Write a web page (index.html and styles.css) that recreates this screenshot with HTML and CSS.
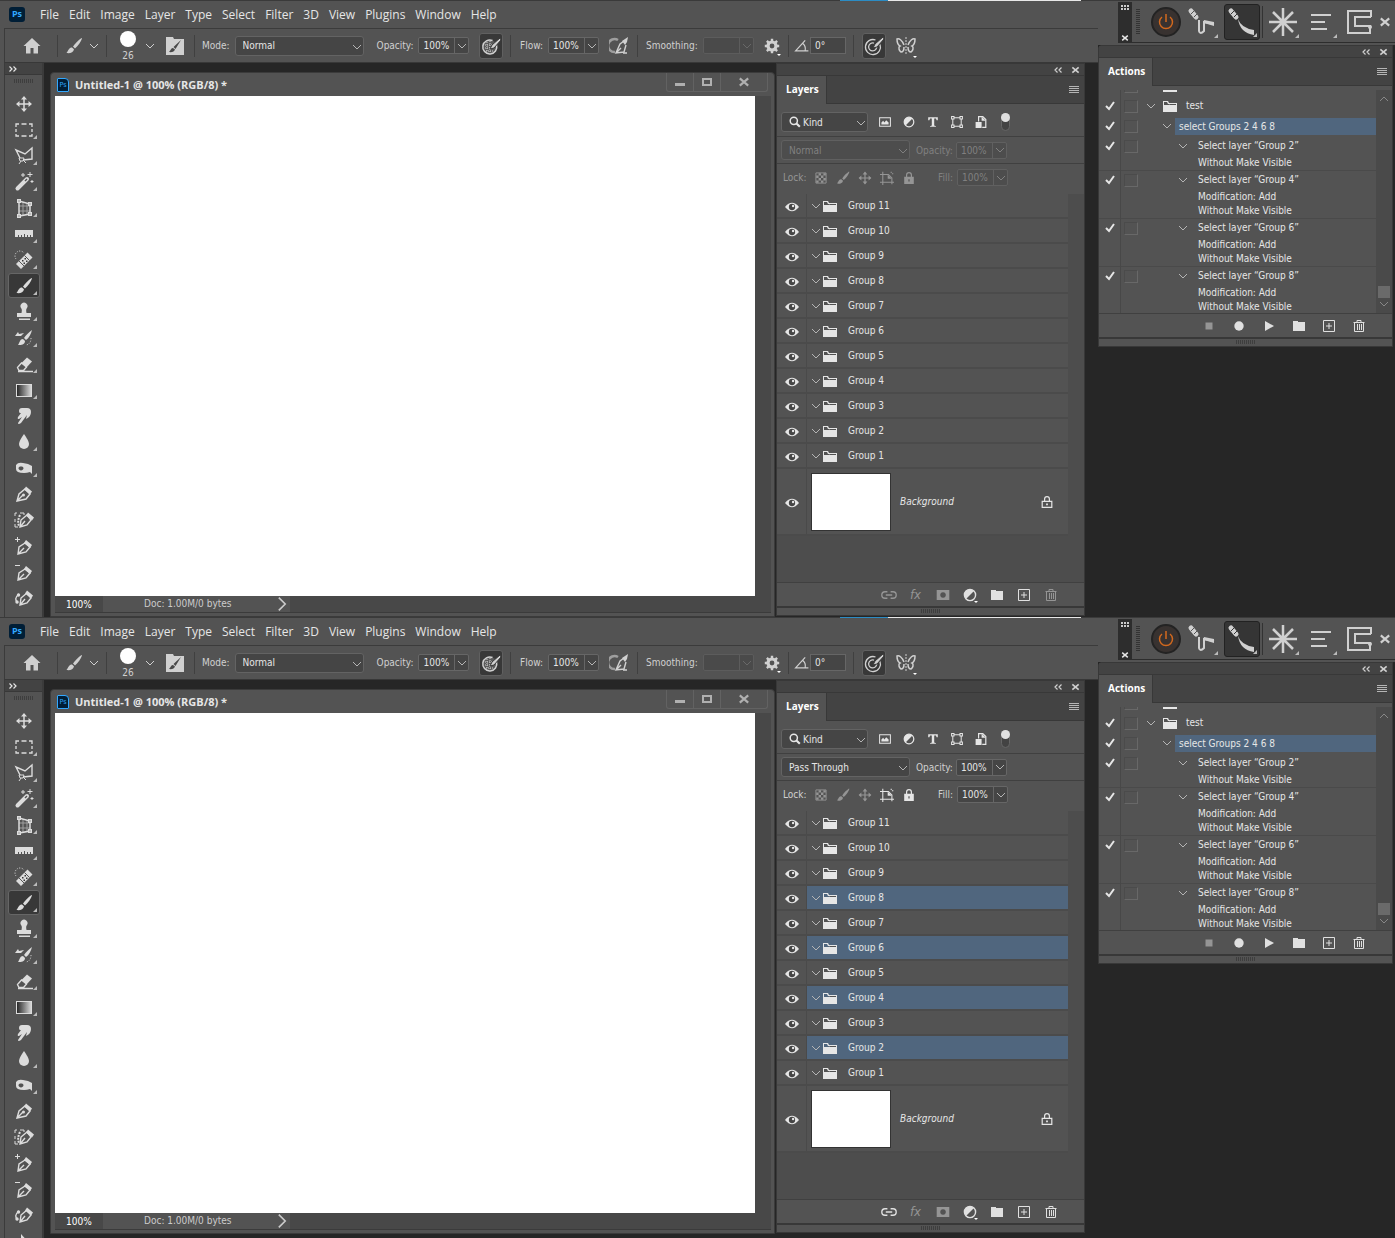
FILE: index.html
```html
<!DOCTYPE html>
<html lang="en">

<head>
    <meta charset="UTF-8">
    <meta name="viewport" content="width=device-width, initial-scale=1.0">
    <title>Select Groups Action</title>
    <link rel="stylesheet" href="styles.css">
</head>

<body>
    <svg class="sprite" aria-hidden="true">
        <symbol id="chevron" viewBox="0 0 10 10"><path d="M1 3l4 4 4-4" fill="none" stroke="currentColor"/></symbol>
        <symbol id="collapse" viewBox="0 0 10 10"><path d="M4.500 2.500L2 5l2.500 2.500M8.500 2.500L6 5l2.500 2.500" fill="none" stroke="currentColor" stroke-width="1.200"/></symbol>
        <symbol id="cross" viewBox="0 0 10 10"><path d="M1.500 2l7 6M8.500 2l-7 6" fill="none" stroke="currentColor" stroke-width="1.800"/></symbol>
        <symbol id="menu" viewBox="0 0 10 10"><path d="M0 1.500h10M0 3.500h10M0 5.500h10M0 7.500h10" stroke="currentColor"/></symbol>
        <symbol id="home" viewBox="0 0 20 20"><path d="M10 2L1.500 10H4v7.500h4.500V12h3v5.500H16V10h2.500z"/></symbol>
        <symbol id="brush" viewBox="0 0 20 20"><path d="M17.500 2c-3 2-6.500 5.500-8.500 8.500l2 2C14 10 17 5.500 18 2.500zM8 11.500c-3 0-3.500 2.500-5.500 5.500 3.500.6 7-.5 7.500-3.700z"/></symbol>
        <symbol id="brush-panel" viewBox="0 0 20 20"><path d="M1 1h7l1 2h10v16H1z"/><path d="M16 4L8.500 11l2 2zM8 12c-2 0-2 2-4 4 3 .5 5.500-.5 6-2.500z" fill="#484848"/></symbol>
        <symbol id="pressure" viewBox="0 0 20 20"><circle cx="9" cy="11" r="7" fill="#5a5a5a"/><path d="M15.500 9a7 7 0 1 1-4-4.500" fill="none" stroke="currentColor" stroke-width="1.500"/><path d="M4 9h7M4 12h8M5 15h8M6 6v10M9 5v12" stroke="currentColor" stroke-dasharray="1 1"/><path d="M19 2l-8 7-2 4 4-1 7-8z" stroke="#383838"/></symbol>
        <symbol id="airbrush" viewBox="0 0 20 20"><path d="M9 4a6.500 6.500 0 1 0-3 12" fill="none" stroke="currentColor" stroke-width="2.500" opacity=".6"/><path d="M15 5l-4 3-4 9 8-1 2-7M7 17l5-5" fill="none" stroke="currentColor" stroke-width="1.400"/><path d="M19 1l-6 4 3 4 2-3z"/><path d="M14 17h4"  stroke="currentColor" stroke-width="1.500"/></symbol>
        <symbol id="gear" viewBox="0 0 20 20"><circle cx="10" cy="10" r="5" fill="none" stroke="currentColor" stroke-width="4"/><path d="M10 1v4M10 15v4M1 10h4M15 10h4M3.600 3.600l3 3M13.400 13.400l3 3M3.600 16.400l3-3M13.400 6.600l3-3" stroke="currentColor" stroke-width="3"/></symbol>
        <symbol id="angle" viewBox="0 0 20 20"><path d="M18 16H2L14 3M11 7q4 3 3 9" fill="none" stroke="currentColor" stroke-width="1.500"/></symbol>
        <symbol id="target" viewBox="0 0 20 20"><path d="M16 8.500a7.500 7.500 0 1 1-4.500-4.500M12.500 10a4 4 0 1 1-2.500-2.800" fill="none" stroke="currentColor" stroke-width="1.300"/><path d="M19 1l-8 7-2 4 4-1 7-8z" stroke="#383838"/></symbol>
        <symbol id="butterfly" viewBox="0 0 20 20"><path d="M8 9C6 4 3 2 1 3c0 4 1 6 3 7-2 1-1 5 1 6 2 0 3-2 3-5M12 9c2-5 5-7 7-6 0 4-1 6-3 7 2 1 1 5-1 6-2 0-3-2-3-5" fill="none" stroke="currentColor" stroke-width="1.500"/><path d="M10 1v18" stroke="currentColor" stroke-dasharray="2 1"/></symbol>
        <symbol id="move" viewBox="0 0 20 20"><path d="M10 3v14M3 10h14" stroke="currentColor" stroke-width="1.500"/><path d="M10 2l3 3.500H7zM10 18l3-3.500H7zM2 10l3.500-3v6zM18 10l-3.500-3v6z"/></symbol>
        <symbol id="marquee" viewBox="0 0 20 20"><path d="M2 7V4h3M7.500 4h5M15 4h3v3M18 9v3M18 14v2h-3M12.500 16h-5M5 16H2v-2M2 12V9" fill="none" stroke="currentColor" stroke-width="1.300"/></symbol>
        <symbol id="lasso" viewBox="0 0 20 20"><path d="M9 14l9-1V2l-7 6-9-4 4 8" fill="none" stroke="currentColor" stroke-width="1.400"/><path d="M5 12h5l-1 3H6zM7 15l-2 3M9 14l3 3" fill="none" stroke="currentColor"/></symbol>
        <symbol id="wand" viewBox="0 0 20 20"><path d="M3.500 16.500L13 7" stroke="currentColor" stroke-width="4" stroke-linecap="round"/><path d="M11 9l2-2" stroke="#535353" stroke-width="1.500"/><path d="M9 1v4M7 3h4M16 0v5M13.500 2.500h5M18 8v3M16.500 9.500h3" stroke="currentColor"/></symbol>
        <symbol id="warp" viewBox="0 0 20 20"><path d="M5 8h11M5 13h11M9 4v13M13 5v12" fill="none" stroke="#a0a0a0"/><path d="M5 3l11 3v10L5 18z" fill="none" stroke="currentColor" stroke-width="1.500"/><path d="M3 1h4v4H3zM14 4h4v4h-4zM14 14h4v4h-4zM3 16h4v4H3z"/><path d="M4.500 2.500h1v1h-1zM15.500 5.500h1v1h-1zM15.500 15.500h1v1h-1zM4.500 17.500h1v1h-1z" fill="#535353"/></symbol>
        <symbol id="ruler" viewBox="0 0 20 20"><path d="M1 6h18v7h-2v-2h-1v2h-2v-2h-1v2h-2v-3h-1v3H8v-2H7v2H5v-2H4v2H1z"/></symbol>
        <symbol id="heal" viewBox="0 0 20 20"><path d="M4.500 16.500L16 5" stroke="currentColor" stroke-width="7"/><path d="M5 11l5 5M10.500 5.500l5 5" stroke="#535353"/><path d="M8 10h1.500v1.500H8zM10.500 8h1.500v1.500h-1.500zM9.500 12.500H11V14H9.500zM12 10.500h1.500V12H12z" fill="#383838"/><path d="M2 9a5 5 0 0 1 8-6" fill="none" stroke="currentColor" stroke-dasharray="1 1.500"/></symbol>
        <symbol id="stamp" viewBox="0 0 20 20"><path d="M7 6a3.500 3.500 0 1 1 6 0c-1 1-1 2-.5 5H17v4H3v-4h4.500C8 8 8 7 7 6zM5 16.500h11V18H5z"/></symbol>
        <symbol id="history" viewBox="0 0 20 20"><path d="M18 2c-3 2-6 5-8 8l2 2c3-2 5-6 6-10zM9 11c-3 0-3 3-5 6 4 .5 7-1 7-4zM1 8l3-4 1 2 5-1-3 3z"/><path d="M17 10q0 6-5 7" fill="none" stroke="currentColor" stroke-dasharray="1 1.500"/></symbol>
        <symbol id="eraser" viewBox="0 0 20 20"><path d="M3.500 13.500L7.500 9l5 4-3 3.500H5zM4 17.500h15" fill="none" stroke="currentColor" stroke-width="1.300"/><path d="M7.500 9L13 3.500l5 4-5.500 6z"/></symbol>
        <symbol id="gradient" viewBox="0 0 20 20"><rect x="2.500" y="4.500" width="15" height="12" fill="url(#fade)" stroke="currentColor"/></symbol>
        <symbol id="smudge" viewBox="0 0 20 20"><path d="M5 5q0-3 3-3h5q4 0 4 4 0 5-5 7l1-4-6 8q-3 2-3 0l4-6-3 2q-2 0-1-2l3-4H6q-1 0-1-2z"/></symbol>
        <symbol id="drop" viewBox="0 0 20 20"><path d="M10 2q5 7 5 10a5 5 0 0 1-10 0q0-3 5-10z"/></symbol>
        <symbol id="sponge" viewBox="0 0 20 20"><path fill-rule="evenodd" d="M2 7q2-3 7-2l5 1 4 2v8l-2-2q-3 1-6 1-8 0-8-4zM6 8.500a2.500 2 0 1 0 2 0z"/></symbol>
        <symbol id="pen" viewBox="0 0 20 20"><path d="M3 17l2-7 6-5 5 5-4 5zM3 17l6-6" fill="none" stroke="currentColor" stroke-width="1.400"/><path d="M12 2.500l6 5-2 3-6-5z"/><circle cx="9.500" cy="11" r="1.500"/></symbol>
        <symbol id="select-pen" viewBox="0 0 20 20"><path d="M6 17l1-7 6-5 4 5-4 5zM6 17l5-6" fill="none" stroke="currentColor" stroke-width="1.400"/><path d="M14 2.500l6 5-2 3-6-5z"/><path d="M3 3H1v3M6 3h4v2M1 9v3M1 14v3h3" fill="none" stroke="currentColor"/><path d="M6 5q-3 6-1 11" fill="none" stroke="currentColor" stroke-width="2" stroke-dasharray="2 1"/></symbol>
        <symbol id="add-pen" viewBox="0 0 20 20"><path d="M4 18l1-7 6-4 5 4-4 5zM4 18l6-6" fill="none" stroke="currentColor" stroke-width="1.400"/><path d="M12 4l6 5-2 3-6-5z"/><path d="M3.500 1v5M1 3.500h5" stroke="currentColor"/></symbol>
        <symbol id="remove-pen" viewBox="0 0 20 20"><path d="M4 18l1-7 6-4 5 4-4 5zM4 18l6-6" fill="none" stroke="currentColor" stroke-width="1.400"/><path d="M12 4l6 5-2 3-6-5z"/><path d="M1 3.500h5" stroke="currentColor"/></symbol>
        <symbol id="curve-pen" viewBox="0 0 20 20"><path d="M6 17l1-7 6-5 4 5-4 5zM6 17l5-6M5 6q-6 5-1 9" fill="none" stroke="currentColor" stroke-width="1.400"/><path d="M13 2.500l6 5-2 3-6-5z"/><circle cx="4.500" cy="7" r="1.700"/><circle cx="3" cy="14" r="1.700"/></symbol>
        <symbol id="arrow" viewBox="0 0 20 20"><path d="M7 3v14l4-4h5z"/></symbol>
        <symbol id="search" viewBox="0 0 20 20"><circle cx="8" cy="8" r="6" fill="none" stroke="currentColor" stroke-width="2.500"/><path d="M12 12l6 6" stroke="currentColor" stroke-width="3.500"/></symbol>
        <symbol id="image" viewBox="0 0 20 20"><path d="M1 3h18v14H1z" fill="none" stroke="currentColor" stroke-width="1.700"/><path d="M4 14v-3l3-3 2 3 3-4 4 4v3z"/></symbol>
        <symbol id="adjust" viewBox="0 0 20 20"><circle cx="10" cy="10" r="8" fill="none" stroke="currentColor" stroke-width="2"/><path d="M15.700 4.300A8 8 0 1 0 4.300 15.700z"/></symbol>
        <symbol id="type" viewBox="0 0 20 20"><path d="M2 2h16v5h-2l-1-3h-3v12l3 1v1H5v-1l3-1V4H5L4 7H2z"/></symbol>
        <symbol id="shape" viewBox="0 0 20 20"><path d="M5 3h10M5 17h10M3 5v10M17 5v10M1 1h4v4H1zM15 1h4v4h-4zM1 15h4v4H1zM15 15h4v4h-4z" fill="none" stroke="currentColor" stroke-width="1.700"/></symbol>
        <symbol id="smart" viewBox="0 0 20 20"><path d="M6 9V1h7l5 5v13h-6" fill="none" stroke="currentColor" stroke-width="2"/><path d="M1 10h10v10H1zM11 1v7h7z"/></symbol>
        <symbol id="checker" viewBox="0 0 20 20"><path d="M1.500 1.500h17v17h-17z" fill="none" stroke="currentColor" stroke-width="1.500"/><path d="M6 2h4v4H6zM14 2h4v4h-4zM2 6h4v4H2zM10 6h4v4h-4zM6 10h4v4H6zM14 10h4v4h-4zM2 14h4v4H2zM10 14h4v4h-4z"/></symbol>
        <symbol id="artboard" viewBox="0 0 20 20"><path d="M0 5h12l5 5v6H4V1M17 19v-3h3M4 16v4M0 16h4M16 1v2M19 4h-2" fill="none" stroke="currentColor" stroke-width="1.500"/><path d="M11 5v6h6z"/></symbol>
        <symbol id="lock" viewBox="0 0 20 20"><path fill-rule="evenodd" d="M2 8h16v12H2zM9 12v4h2v-4z"/><path d="M6 9V5q0-4 4-4t4 4v4" fill="none" stroke="currentColor" stroke-width="2"/></symbol>
        <symbol id="lock-line" viewBox="0 0 20 20"><path d="M2 9h16v10H2zM6 9V5q0-4 4-4t4 4v4" fill="none" stroke="currentColor" stroke-width="2"/><path d="M8.500 12.500h3v3h-3z"/></symbol>
        <symbol id="eye" viewBox="0 0 20 20"><path d="M0 10q10-12 20 0-10 12-20 0z"/><circle cx="10" cy="10" r="4.500" fill="#454545"/><circle cx="11.500" cy="8.500" r="1.700"/></symbol>
        <symbol id="folder" viewBox="0 0 16 12"><path fill-rule="evenodd" d="M1 1h5l1 2h8v9H1zM2 2v3h5l1-1H6L5 2z"/><path d="M8 4h6v1H7z" fill="#505050"/></symbol>
        <symbol id="folder-solid" viewBox="0 0 16 12"><path d="M2 1h5v1h7v9H2z"/></symbol>
        <symbol id="link" viewBox="0 0 20 20"><path d="M8 6H5a4 4 0 0 0 0 8h3M12 6h3a4 4 0 0 1 0 8h-3M6 10h8" fill="none" stroke="currentColor" stroke-width="1.700"/></symbol>
        <symbol id="mask" viewBox="0 0 20 20"><path fill-rule="evenodd" d="M1 3h18v14H1zM10 6a4 4 0 1 0 .1 0z"/></symbol>
        <symbol id="plus" viewBox="0 0 12 12"><path d="M.5.5h11v11H.500zM3 6h6M6 3v6" fill="none" stroke="currentColor"/></symbol>
        <symbol id="trash" viewBox="0 0 12 12"><path d="M.500 2.500h11M4 2.500v-2h4v2M1.500 2.500v9h9v-9M4.500 4v6M6.500 4v6M8.500 4v6" fill="none" stroke="currentColor"/></symbol>
        <symbol id="tick" viewBox="0 0 10 10"><path d="M1 5l3 3 5-7" fill="none" stroke="currentColor" stroke-width="2"/></symbol>
        <symbol id="stop" viewBox="0 0 12 12"><path d="M2.500 2.500h7v7h-7z"/></symbol>
        <symbol id="record" viewBox="0 0 12 12"><circle cx="6" cy="6" r="4.700"/></symbol>
        <symbol id="play" viewBox="0 0 12 12"><path d="M2 1l9 5-9 5z"/></symbol>
        <symbol id="power" viewBox="0 0 32 32"><circle cx="16" cy="16" r="14" fill="#383230" stroke="#232323" stroke-width="2"/><path d="M12 11a6.500 6.500 0 1 0 8 0M16 8v8" fill="none" stroke="#d2691e" stroke-width="1.500"/></symbol>
        <symbol id="lazy" viewBox="0 0 32 32"><path d="M5 5l5 6" stroke="currentColor" stroke-width="5" stroke-linecap="round"/><path d="M5 8l4-4M8 11l4-4" stroke="#535353"/><path d="M13 14v11q1 4 5 0v-9l10 2" fill="none" stroke="currentColor" stroke-width="2"/><path d="M18 14l10 2v4l-10-3z"/></symbol>
        <symbol id="curve" viewBox="0 0 32 32"><path d="M5 5l5 6" stroke="currentColor" stroke-width="5" stroke-linecap="round"/><path d="M5 8l4-4M8 11l4-4" stroke="#353535"/><path d="M12 13q3 9 16 11v5q-14-2-16-16z"/></symbol>
        <symbol id="star" viewBox="0 0 32 32"><path d="M16 2v28M2 16h28M6 6l20 20M6 26L26 6" stroke="currentColor" stroke-width="2.500"/></symbol>
        <symbol id="lines" viewBox="0 0 32 32"><path d="M6 9h20M6 16h14M6 23h16" stroke="currentColor" stroke-width="2"/></symbol>
        <symbol id="spiral" viewBox="0 0 32 32"><path d="M28 11V5H5v22h22v-7H12v-9h16" fill="none" stroke="currentColor" stroke-width="2"/><circle cx="27" cy="21" r="2"/></symbol>
        <linearGradient id="fade"><stop offset="0" stop-color="#222"/><stop offset="1" stop-color="#ddd"/></linearGradient>
    </svg>

    <template id="windowTemplate">
        <section class="app">
            <div class="main">
                <div class="top-edge"><span class="edge-blue"></span><span class="edge-white"></span></div>
                <nav class="menu-bar">
                    <span class="ps-logo">Ps</span>
                    <a href="#">File</a><a href="#">Edit</a><a href="#">Image</a><a href="#">Layer</a><a href="#">Type</a><a href="#">Select</a><a href="#">Filter</a><a href="#">3D</a><a href="#">View</a><a href="#">Plugins</a><a href="#">Window</a><a href="#">Help</a>
                </nav>

                <div class="options-bar">
                    <div class="group home-group">
                        <button type="button" aria-label="Home"><svg class="icon20"><use href="#home"/></svg></button>
                    </div>
                    <div class="group brush-group">
                        <button type="button" aria-label="Brush"><svg class="icon20"><use href="#brush"/></svg><svg class="icon10"><use href="#chevron"/></svg></button>
                    </div>
                    <div class="group tip-group">
                        <button type="button" class="tip"><span class="tip-dot"></span>26</button>
                        <svg class="icon10"><use href="#chevron"/></svg>
                        <button type="button" class="brush-settings" aria-label="Brush settings"><svg class="icon20"><use href="#brush-panel"/></svg></button>
                    </div>
                    <div class="group mode-group">
                        <label class="field">Mode:
                            <span class="drop drop-wide"><select><option>Normal</option></select><svg class="icon10"><use href="#chevron"/></svg></span>
                        </label>
                        <label class="field">Opacity:
                            <span class="number"><input type="text" value="100%"><svg class="icon10"><use href="#chevron"/></svg></span>
                        </label>
                        <button type="button" class="toggle on" aria-label="Pressure for opacity"><svg class="icon20"><use href="#pressure"/></svg></button>
                    </div>
                    <div class="group flow-group">
                        <label class="field">Flow:
                            <span class="number"><input type="text" value="100%"><svg class="icon10"><use href="#chevron"/></svg></span>
                        </label>
                        <button type="button" aria-label="Airbrush"><svg class="icon20"><use href="#airbrush"/></svg></button>
                    </div>
                    <div class="group smooth-group">
                        <label class="field">Smoothing:
                            <span class="number off"><input type="text" disabled><svg class="icon10"><use href="#chevron"/></svg></span>
                        </label>
                        <button type="button" class="more" aria-label="Smoothing options"><svg class="icon16"><use href="#gear"/></svg></button>
                    </div>
                    <div class="group angle-group">
                        <label class="field"><svg class="icon16"><use href="#angle"/></svg><input class="angle" type="text" value="0°" aria-label="Angle"></label>
                    </div>
                    <div class="group last-group">
                        <button type="button" class="toggle on" aria-label="Pressure for size"><svg class="icon20"><use href="#target"/></svg></button>
                        <button type="button" class="more" aria-label="Symmetry"><svg class="icon20"><use href="#butterfly"/></svg></button>
                    </div>
                </div>

                <div class="workspace">
                    <aside class="toolbar">
                        <div class="toolbar-head"><svg class="icon10 flip"><use href="#collapse"/></svg></div>
                        <div class="grip"></div>
                        <div class="tools"></div>
                    </aside>

                    <div class="document">
                        <header class="title-bar">
                            <span class="doc-icon">Ps</span>
                            <h1>Untitled-1 @ 100% (RGB/8) *</h1>
                            <div class="window-buttons">
                                <button type="button" aria-label="Minimize"><span class="min-mark"></span></button>
                                <button type="button" aria-label="Maximize"><span class="max-mark"></span></button>
                                <button type="button" aria-label="Close"><svg class="icon12"><use href="#cross"/></svg></button>
                            </div>
                        </header>
                        <div class="canvas-area"><div class="canvas"></div></div>
                        <footer class="status-bar">
                            <span class="zoom">100%</span>
                            <span class="doc-size">Doc: 1.00M/0 bytes</span>
                            <svg class="icon10 right"><use href="#chevron"/></svg>
                        </footer>
                    </div>

                    <aside class="panel layers">
                        <div class="panel-head"><svg class="icon10"><use href="#collapse"/></svg><svg class="icon10 close"><use href="#cross"/></svg></div>
                        <div class="tabs"><h2>Layers</h2><svg class="icon10"><use href="#menu"/></svg></div>
                        <div class="filter-row">
                            <span class="drop drop-kind"><svg class="icon12 lens"><use href="#search"/></svg><select aria-label="Filter"><option>Kind</option></select><svg class="icon10"><use href="#chevron"/></svg></span>
                            <div class="filters">
                                <button type="button" aria-label="Pixel"><svg class="icon12"><use href="#image"/></svg></button>
                                <button type="button" aria-label="Adjustment"><svg class="icon12"><use href="#adjust"/></svg></button>
                                <button type="button" aria-label="Type"><svg class="icon12"><use href="#type"/></svg></button>
                                <button type="button" aria-label="Shape"><svg class="icon12"><use href="#shape"/></svg></button>
                                <button type="button" aria-label="Smart object"><svg class="icon12"><use href="#smart"/></svg></button>
                                <button type="button" aria-label="Filter on"><span class="switch"></span></button>
                            </div>
                        </div>
                        <div class="blend-row">
                            <span class="drop drop-wide"><select class="blend" aria-label="Blend mode"></select><svg class="icon10"><use href="#chevron"/></svg></span>
                            <label class="field">Opacity: <span class="number"><input type="text" value="100%"><svg class="icon10"><use href="#chevron"/></svg></span></label>
                        </div>
                        <div class="lock-row">
                            <span class="lock-label">Lock:</span>
                            <div class="locks">
                                <button type="button" class="dim" aria-label="Transparency"><svg class="icon12"><use href="#checker"/></svg></button>
                                <button type="button" class="dim" aria-label="Pixels"><svg class="icon16"><use href="#brush"/></svg></button>
                                <button type="button" class="dim" aria-label="Position"><svg class="icon16"><use href="#move"/></svg></button>
                                <button type="button" aria-label="Artboard"><svg class="icon14"><use href="#artboard"/></svg></button>
                                <button type="button" aria-label="All"><svg class="icon12"><use href="#lock"/></svg></button>
                            </div>
                            <label class="field fill-field">Fill: <span class="number"><input type="text" value="100%"><svg class="icon10"><use href="#chevron"/></svg></span></label>
                        </div>
                        <div class="layer-area">
                            <ul class="layer-list">
                                <li class="layer background">
                                    <span class="eye"><svg class="icon14"><use href="#eye"/></svg></span>
                                    <div class="layer-body"><span class="thumb"></span><em>Background</em><svg class="icon12"><use href="#lock-line"/></svg></div>
                                </li>
                            </ul>
                        </div>
                        <footer class="panel-foot layer-foot">
                            <button type="button" class="needs-layer" aria-label="Link"><svg class="icon16"><use href="#link"/></svg></button>
                            <button type="button" class="dim fx">fx</button>
                            <button type="button" class="dim" aria-label="Mask"><svg class="icon14"><use href="#mask"/></svg></button>
                            <button type="button" class="more" aria-label="Adjustment"><svg class="icon14"><use href="#adjust"/></svg></button>
                            <button type="button" aria-label="Group"><svg class="folder"><use href="#folder-solid"/></svg></button>
                            <button type="button" aria-label="New layer"><svg class="icon12"><use href="#plus"/></svg></button>
                            <button type="button" class="needs-layer" aria-label="Delete"><svg class="icon12"><use href="#trash"/></svg></button>
                        </footer>
                        <div class="resize"><div class="grip"></div></div>
                    </aside>
                </div>
            </div>

            <div class="side">
                <div class="plugin-row">
                    <div class="plugin-handle"><span class="dots"></span><svg class="icon10"><use href="#cross"/></svg></div>
                    <div class="plugin-bar">
                        <div class="plugin-grip"></div>
                        <button type="button" aria-label="Power"><svg class="icon32"><use href="#power"/></svg></button>
                        <button type="button" class="corner" aria-label="Lazy"><svg class="icon32"><use href="#lazy"/></svg></button>
                        <button type="button" class="corner on" aria-label="Curve"><svg class="icon32"><use href="#curve"/></svg></button>
                        <span class="plugin-sep"></span>
                        <button type="button" class="corner" aria-label="Rays"><svg class="icon32"><use href="#star"/></svg></button>
                        <button type="button" class="corner" aria-label="Lines"><svg class="icon32"><use href="#lines"/></svg></button>
                        <button type="button" aria-label="Spiral"><svg class="icon32"><use href="#spiral"/></svg></button>
                        <svg class="icon12"><use href="#cross"/></svg>
                    </div>
                </div>
                <aside class="panel actions">
                    <div class="panel-head"><svg class="icon10"><use href="#collapse"/></svg><svg class="icon10 close"><use href="#cross"/></svg></div>
                    <div class="tabs"><h2>Actions</h2><svg class="icon10"><use href="#menu"/></svg></div>
                    <div class="action-area">
                        <ul class="action-list"></ul>
                        <div class="scrollbar"><svg class="icon10 up"><use href="#chevron"/></svg><span class="thumb-bar"></span><svg class="icon10"><use href="#chevron"/></svg></div>
                    </div>
                    <footer class="panel-foot action-foot">
                        <button type="button" class="dim" aria-label="Stop"><svg class="icon12"><use href="#stop"/></svg></button>
                        <button type="button" aria-label="Record"><svg class="icon12"><use href="#record"/></svg></button>
                        <button type="button" aria-label="Play"><svg class="icon12"><use href="#play"/></svg></button>
                        <button type="button" aria-label="New set"><svg class="folder"><use href="#folder-solid"/></svg></button>
                        <button type="button" aria-label="New action"><svg class="icon12"><use href="#plus"/></svg></button>
                        <button type="button" aria-label="Delete"><svg class="icon12"><use href="#trash"/></svg></button>
                    </footer>
                    <div class="resize"><div class="grip"></div></div>
                </aside>
            </div>
        </section>
    </template>

    <script src="script.js"></script>
</body>

</html>
```

FILE: styles.css
```css
* {
    box-sizing: border-box;
}

body {
    margin: 0;
    height: 100vh;
    display: grid;
    grid-template-rows: 617px 1fr;
    overflow: hidden;
    background-color: #262626;
    color: #e6e6e6;
    font-family: "DejaVu Sans Condensed", "DejaVu Sans", sans-serif;
    font-size: 10px;
}

button,
input,
select {
    font: inherit;
    color: inherit;
    background: none;
    border: none;
    margin: 0;
    padding: 0;
}

button {
    display: flex;
    align-items: center;
    justify-content: center;
    position: relative;
}

h1,
h2,
ul {
    margin: 0;
    padding: 0;
    list-style: none;
}

h1,
h2,
.menu-bar {
    font-family: "Open Sans", "Noto Sans", sans-serif;
}

svg {
    display: block;
    flex: none;
    fill: currentColor;
}

.sprite {
    position: absolute;
    width: 0;
    height: 0;
}

.icon10 { width: 10px; height: 10px; }
.icon12 { width: 12px; height: 12px; }
.icon14 { width: 14px; height: 14px; }
.icon16 { width: 16px; height: 16px; }
.icon20 { width: 20px; height: 20px; }
.icon32 { width: 32px; height: 32px; }
.folder { width: 16px; height: 12px; }

.flip { transform: scaleX(-1); }
.up { transform: scaleY(-1); }
.right { transform: rotate(-90deg); }

.app {
    display: grid;
    grid-template-columns: 1fr 297px;
    min-height: 0;
    overflow: hidden;
    background-color: #262626;
}

.main {
    display: flex;
    flex-direction: column;
    min-width: 0;
    min-height: 0;
}

/* header */
.top-edge {
    display: flex;
    height: 1px;
    background-color: #3a3a3a;
    padding-left: 840px;
}

.edge-blue {
    width: 48px;
    background-color: #2c8cc4;
}

.edge-white {
    width: 193px;
    background-color: #e8e8e8;
}

.menu-bar {
    display: flex;
    align-items: center;
    flex: none;
    gap: 10px;
    height: 27px;
    padding-left: 9px;
    background-color: #535353;
    font-size: 12px;
}

.menu-bar a {
    color: #e6e6e6;
    text-decoration: none;
}

.ps-logo {
    width: 16px;
    height: 15px;
    margin-right: 5px;
    border-radius: 3px;
    background-color: #001e36;
    color: #31a8ff;
    font-size: 9px;
    font-weight: bold;
    line-height: 14px;
    text-align: center;
}

.options-bar {
    display: flex;
    flex: none;
    height: 35px;
    margin-left: 4px;
    border-top: 1px solid #3b3b3b;
    border-left: 1px solid #3b3b3b;
    border-bottom: 1px solid #383838;
    background-color: #535353;
    box-shadow: -4px 0 #535353;
    color: #d0d0d0;
}

.group {
    position: relative;
    display: flex;
    align-items: center;
    flex: none;
}

.group::after {
    content: "";
    position: absolute;
    right: 0;
    top: 6px;
    bottom: 5px;
    width: 1px;
    background-color: #404040;
}

.home-group { width: 53px; padding-left: 17px; }
.brush-group { width: 49px; padding-left: 6px; }
.brush-group button { gap: 5px; }
.tip-group { width: 88px; gap: 4px; padding-left: 8px; }
.mode-group { width: 316px; padding-left: 7px; gap: 13px; }
.flow-group { width: 127px; padding-left: 9px; gap: 10px; }
.smooth-group { width: 151px; padding-left: 8px; gap: 10px; }
.angle-group { width: 65px; padding-left: 5px; }
.last-group { padding-left: 8px; gap: 10px; }
.last-group::after { display: none; }

.tip {
    flex-direction: column;
    width: 26px;
    line-height: 10px;
}

.tip-dot {
    width: 16px;
    height: 16px;
    margin-bottom: 4px;
    border-radius: 50%;
    background-color: #fff;
}

.brush-settings {
    margin-left: 6px;
}

.field {
    display: flex;
    align-items: center;
    gap: 5px;
    white-space: nowrap;
}

.drop {
    position: relative;
    display: flex;
    align-items: center;
    height: 20px;
    border: 1px solid #636363;
    border-radius: 3px;
    background-color: #454545;
    color: #e6e6e6;
}

.drop select {
    appearance: none;
    width: 100%;
    height: 18px;
    padding-left: 7px;
}

.drop .icon10 {
    position: absolute;
    right: 1px;
    top: 5px;
    color: #b5b5b5;
}

.drop-wide {
    width: 129px;
}

.number {
    display: flex;
    align-items: center;
    width: 51px;
    height: 17px;
    border: 1px solid #666;
    border-radius: 2px;
    background-color: #454545;
    color: #e6e6e6;
}

.number input {
    width: 36px;
    height: 15px;
    padding-left: 4px;
    border-right: 1px solid #666;
}

.number .icon10 {
    margin-left: 2px;
    color: #b5b5b5;
}

.number.off {
    border-color: #5c5c5c;
    background-color: #4a4a4a;
}

.number.off input {
    border-color: #5c5c5c;
}

.number.off svg {
    color: #686868;
}

.angle {
    width: 36px;
    height: 17px;
    padding-left: 4px;
    border: 1px solid #666;
    background-color: #454545;
    color: #e6e6e6;
}

.angle-group .field {
    gap: 0;
}

.toggle {
    width: 24px;
    height: 26px;
    border-radius: 3px;
}

.toggle.on {
    border: 1px solid #606060;
    background-color: #383838;
}

.mode-group .toggle {
    margin-left: -3px;
}

.more::after {
    content: "";
    position: absolute;
    right: -1px;
    bottom: -2px;
    border: 2px solid transparent;
    border-top-color: #fff;
    border-bottom: none;
}

/* workspace */
.workspace {
    display: flex;
    align-items: flex-start;
    flex: 1;
    min-height: 0;
}

.toolbar {
    width: 44px;
    height: 100%;
    overflow: hidden;
    flex: none;
    border-left: 4px solid #535353;
    background-color: #535353;
    box-shadow: inset 1px 0 #3b3b3b, inset -2px 0 #3b3b3b;
}

.toolbar-head {
    height: 12px;
    margin: 0 2px 0 1px;
    padding: 1px 0 0 3px;
    background-color: #434343;
    border-bottom: 1px solid #383838;
}

.grip {
    width: 19px;
    height: 4px;
    background: repeating-linear-gradient(90deg, #3e3e3e 0 1px, #535353 1px 2px);
}

.toolbar .grip {
    margin: 4px 0 8px 10px;
}

.tools {
    display: grid;
    grid-auto-rows: 26px;
    margin: 0 4px;
    color: #dcdcdc;
}

.tool {
    height: 25px;
    width: 32px;
    border: 1px solid transparent;
    border-radius: 3px;
}

.tool.active {
    border-color: #666;
    background-color: #383838;
}

.tool.corner::after,
.plugin-bar .corner::after {
    content: "";
    position: absolute;
    right: 2px;
    bottom: 2px;
    border: 2px solid;
    border-color: transparent #bbb #bbb transparent;
}

.document {
    flex: 1;
    min-width: 0;
    margin: 9px 1px 0 6px;
    border: 1px solid #3b3b3b;
    border-radius: 4px 4px 0 0;
    padding: 0 3px 3px 4px;
    background-color: #535353;
}

.title-bar {
    display: flex;
    align-items: center;
    height: 23px;
    padding-left: 2px;
}

.doc-icon {
    width: 12px;
    height: 14px;
    border: 1px solid #31a8ff;
    border-radius: 1px 4px 1px 1px;
    background-color: #001e36;
    color: #31a8ff;
    font-size: 7px;
    line-height: 12px;
    text-align: center;
}

h1 {
    flex: 1;
    margin-left: 6px;
    font-size: 11px;
    line-height: 16px;
}

.window-buttons {
    display: flex;
    align-self: flex-start;
    height: 19px;
    margin-right: 3px;
    border: 1px solid #626262;
    border-top: none;
    border-radius: 0 0 3px 3px;
    color: #b0b0b0;
}

.window-buttons button {
    width: 27px;
    border-right: 1px solid #626262;
}

.window-buttons button:last-child {
    width: 46px;
    border: none;
}

.min-mark {
    width: 10px;
    height: 3px;
    margin-top: 5px;
    background-color: #b0b0b0;
}

.max-mark {
    width: 10px;
    height: 8px;
    border: 2px solid #b0b0b0;
}

.canvas-area {
    padding-right: 16px;
    background-color: #484848;
}

.canvas {
    height: 500px;
    background-color: #fff;
}

.status-bar {
    display: flex;
    align-items: center;
    height: 17px;
    background-color: #484848;
    border-bottom: 1px solid #3b3b3b;
}

.status-bar .zoom {
    width: 48px;
    padding-left: 11px;
    color: #fff;
}

.doc-size {
    width: 171px;
    line-height: 16px;
    padding-left: 41px;
    background-color: #535353;
    color: #ccc;
}

.status-bar svg {
    width: 13px;
    height: 16px;
    color: #ccc;
}

.status-bar .right {
    width: 16px;
    background-color: #535353;
}

/* panels */
.panel {
    border: 1px solid #383838;
    background-color: #535353;
}

.layers {
    width: 309px;
    margin-right: 13px;
    flex: none;
}

.panel-head {
    display: flex;
    align-items: center;
    justify-content: flex-end;
    gap: 8px;
    height: 12px;
    padding-right: 4px;
    background-color: #434343;
    border-bottom: 1px solid #383838;
    color: #d0d0d0;
}

.panel-head .close {
    width: 9px;
}

.tabs {
    display: flex;
    align-items: center;
    justify-content: space-between;
    height: 28px;
    padding-right: 5px;
    background-color: #434343;
    border-bottom: 1px solid #383838;
    color: #b5b5b5;
}

h2 {
    height: 28px;
    padding: 0 7px 0 9px;
    background-color: #535353;
    border-right: 1px solid #383838;
    color: #fff;
    font-size: 10px;
    line-height: 26px;
}

.filter-row,
.blend-row,
.lock-row {
    display: flex;
    align-items: center;
    padding-left: 4px;
}

.filter-row {
    height: 33px;
    padding-top: 4px;
    border-bottom: 1px solid #404040;
}

.drop-kind {
    width: 87px;
}

.drop-kind .lens {
    position: absolute;
    left: 7px;
    pointer-events: none;
}

.drop-kind select {
    padding-left: 21px;
}

.filters {
    display: flex;
    margin-left: 5px;
}

.filters button {
    width: 24px;
    height: 20px;
}

.switch {
    display: block;
    width: 9px;
    height: 18px;
    border: 1px solid #666;
    border-radius: 5px;
    background-color: #434343;
}

.switch::before {
    content: "";
    display: block;
    width: 9px;
    height: 9px;
    margin: -1px;
    border-radius: 50%;
    background-color: #e0e0e0;
}

.blend-row {
    height: 27px;
    border-bottom: 1px solid #404040;
    gap: 6px;
}

.lock-row {
    height: 30px;
    padding: 0 0 3px 6px;
}

.blend-row .field {
    gap: 3px;
}

.field,
.lock-label {
    color: #d0d0d0;
}

.lock-label {
    width: 27px;
}

.locks {
    display: flex;
}

.locks button {
    width: 22px;
    height: 20px;
}

.dim,
.locks .dim {
    color: #959595;
}

.fill-field {
    margin-left: 18px;
    gap: 4px;
}

.no-selection .blend-row *,
.no-selection .lock-row .field,
.no-selection .lock-row .field * {
    color: #808080;
    border-color: #606060;
}

.no-selection .blend-row .drop,
.no-selection .blend-row .number,
.no-selection .lock-row .number {
    background-color: #4d4d4d;
}

.no-selection .blend-row .icon10,
.no-selection .lock-row .icon10 {
    color: #686868;
}

.no-selection .locks,
.no-selection .locks button,
.no-selection .lock-label,
.no-selection .needs-layer {
    color: #959595;
}

.layer-area {
    min-height: 388px;
    padding-right: 16px;
    background-color: #4d4d4d;
}

.layer {
    display: flex;
    height: 25px;
    background-color: #535353;
    border-bottom: 2px solid #4b4b4b;
}

.eye {
    display: flex;
    align-items: center;
    justify-content: center;
    width: 30px;
    padding-top: 2px;
    border-right: 1px solid #4a4a4a;
}

.layer-body {
    display: flex;
    align-items: center;
    flex: 1;
    padding-left: 4px;
}

.layer-body .folder {
    margin: 0 10px 0 1px;
}

.layer-body .icon10 {
    color: #b5b5b5;
}

.layer.selected .layer-body {
    background-color: #50667e;
}

.layer.background {
    height: 67px;
}

.thumb {
    width: 80px;
    height: 58px;
    margin-right: 9px;
    border: 1px solid #333;
    background-color: #fff;
}

.background em {
    flex: 1;
}

.background .icon12 {
    margin-right: 15px;
}

.panel-foot {
    display: flex;
    align-items: center;
    justify-content: flex-end;
    height: 25px;
    border-top: 1px solid #404040;
    border-bottom: 1px solid #383838;
    color: #e0e0e0;
}

.panel-foot button {
    width: 27px;
    height: 20px;
}

.layer-foot {
    padding-right: 20px;
}

.layer-foot .more::after {
    right: 5px;
    bottom: 2px;
}

.fx {
    font-size: 13px;
    font-style: italic;
}

.resize {
    display: flex;
    justify-content: center;
    height: 8px;
    padding-top: 1px;
    border-top: 1px solid #383838;
}

/* right side */
.plugin-row {
    display: flex;
    height: 45px;
    padding: 1px 0 2px 20px;
    background-color: #535353;
    border-top: 1px solid #3a3a3a;
}

.plugin-handle {
    display: flex;
    flex-direction: column;
    align-items: center;
    justify-content: space-between;
    width: 14px;
    flex: none;
    padding: 3px 0 1px;
    background-color: #2d2d2d;
}

.plugin-handle svg {
    width: 8px;
    height: 8px;
}

.dots {
    width: 8px;
    height: 6px;
    background: repeating-linear-gradient(90deg, transparent 0 2px, #2d2d2d 2px 3px), repeating-linear-gradient(#ccc 0 2px, #2d2d2d 2px 3px);
}

.plugin-bar {
    display: flex;
    align-items: center;
    flex: 1;
    min-width: 0;
    overflow: hidden;
    border-bottom: 1px solid #2d2d2d;
    color: #d0d0d0;
}

.plugin-grip {
    width: 4px;
    height: 26px;
    margin: 0 8px 0 4px;
    flex: none;
    background: repeating-linear-gradient(#333 0 1px, #535353 1px 2px);
}

.plugin-bar button {
    width: 36px;
    height: 36px;
    flex: none;
    border-radius: 3px;
}

.plugin-bar .on {
    margin-left: 4px;
    border: 1px solid #222;
    background-color: #353535;
}

.plugin-sep {
    width: 1px;
    height: 32px;
    margin: 0 2px;
    flex: none;
    background-color: #333;
}

.plugin-bar button:nth-last-child(-n+4) {
    margin-right: 2px;
}

.actions {
    margin-right: 2px;
    border-top-left-radius: 4px;
}

.action-area {
    display: flex;
    height: 223px;
    margin-top: 4px;
    overflow: hidden;
}

.action-list {
    flex: 1;
}

.action {
    display: grid;
    grid-template-columns: 22px 1fr;
    line-height: 14px;
}

/* scrolled half out of view */
.action:first-child {
    margin-top: -14px;
}

.action:first-child .checks svg {
    display: none;
}

.checks {
    border-right: 1px solid #484848;
    padding: 5px 0 0 6px;
}

.action-line {
    display: flex;
    align-items: center;
    height: 20px;
}

.action-line .dialog {
    width: 14px;
    height: 13px;
    flex: none;
    margin-left: 3px;
    border: 1px solid #4b4b4b;
    border-right-color: #686868;
    border-bottom-color: #686868;
}

.action-line .icon10 {
    color: #b5b5b5;
}

.action-line .folder {
    margin: 0 8px 0 6px;
}

.set .action-line .icon10 { margin-left: 8px; }
.item .action-line .icon10 { margin-left: 24px; }
.step .action-line .icon10 { margin-left: 40px; }

.step .action-name {
    margin-left: 10px;
}

.item .action-name {
    flex: 1;
    height: 17px;
    margin-left: 3px;
    padding-left: 4px;
    line-height: 17px;
    background-color: #50667e;
}

.detail {
    margin: 0;
    height: 14px;
    padding-left: 77px;
}

.step {
    border-bottom: 1px solid #4a4a4a;
    margin-bottom: -1px;
}

.scrollbar {
    display: flex;
    flex-direction: column;
    align-items: center;
    width: 16px;
    padding: 4px 0 4px;
    background-color: #4a4a4a;
    color: #888;
}

.thumb-bar {
    width: 12px;
    height: 12px;
    margin: auto 0 1px;
    background-color: #6a6a6a;
}

.action-foot {
    padding-right: 18px;
}

.action-foot button {
    width: 30px;
}
```

FILE: script.js
```javascript
const windows = [
    { mode: "Normal", selected: [] },
    { mode: "Pass Through", selected: [2, 4, 6, 8] }
];

const tools = ["move", "marquee", "lasso", "wand", "warp", "ruler", "heal", "brush", "stamp", "history",
    "eraser", "gradient", "smudge", "drop", "sponge", "pen", "select-pen", "add-pen", "remove-pen", "curve-pen", "arrow"];
const withoutMenu = ["move", "smudge", "pen", "select-pen", "add-pen", "remove-pen", "curve-pen"];

const actions = [
    { type: "set", name: "", details: [] },
    { type: "set", name: "test", details: [] },
    { type: "item", name: "select Groups 2 4 6 8", details: [] },
    { type: "step", name: "Select layer “Group 2”", details: ["Without Make Visible"] },
    { type: "step", name: "Select layer “Group 4”", details: ["Modification: Add", "Without Make Visible"] },
    { type: "step", name: "Select layer “Group 6”", details: ["Modification: Add", "Without Make Visible"] },
    { type: "step", name: "Select layer “Group 8”", details: ["Modification: Add", "Without Make Visible"] }
];

function icon(name, size) {
    return `<svg class="${size}"><use href="#${name}"/></svg>`;
}

function toolButton(name) {
    const active = name === "brush" ? " active" : "";
    const corner = withoutMenu.includes(name) ? "" : " corner";
    return `<button type="button" class="tool${active}${corner}" aria-label="${name}">${icon(name, "icon20")}</button>`;
}

function layerRow(number, selected) {
    return `<li class="layer${selected ? " selected" : ""}">
        <span class="eye">${icon("eye", "icon14")}</span>
        <div class="layer-body">${icon("chevron", "icon10")}${icon("folder", "folder")}<span>Group ${number}</span></div>
    </li>`;
}

function actionRow(action) {
    const folder = action.type === "set" ? icon("folder", "folder") : "";
    const details = action.details.map(text => `<p class="detail">${text}</p>`).join("");
    return `<li class="action ${action.type}">
        <span class="checks">${icon("tick", "icon10")}</span>
        <div>
            <div class="action-line"><span class="dialog"></span>${icon("chevron", "icon10")}${folder}<span class="action-name">${action.name}</span></div>
            ${details}
        </div>
    </li>`;
}

for (const win of windows) {
    const app = document.getElementById("windowTemplate").content.cloneNode(true);

    let rows = "";
    for (let i = 11; i >= 1; i--) {
        rows += layerRow(i, win.selected.includes(i));
    }

    app.querySelector(".tools").innerHTML = tools.map(toolButton).join("");
    app.querySelector(".layer-list").insertAdjacentHTML("afterbegin", rows);
    app.querySelector(".action-list").innerHTML = actions.map(actionRow).join("");
    app.querySelector(".blend").innerHTML = `<option>${win.mode}</option>`;
    if (win.selected.length === 0) {
        app.querySelector(".layers").classList.add("no-selection");
    }

    document.body.appendChild(app);
}
```
